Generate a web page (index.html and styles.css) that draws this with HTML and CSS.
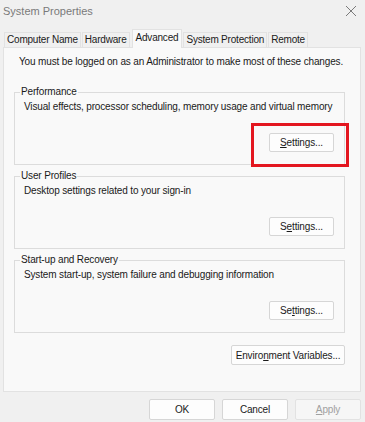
FILE: index.html
```html
<!DOCTYPE html>
<html lang="en">
<head>
    <meta charset="UTF-8">
    <title>System Properties</title>
    <link rel="stylesheet" href="styles.css">
</head>
<body>

    <!-- title bar -->
    <div class="titlebar">
        <span class="title">System Properties</span>
        <svg class="close" width="12" height="12" viewBox="0 0 12 12">
            <path d="M1 1 L11 11 M11 1 L1 11" stroke="#7a7a7a" stroke-width="1" fill="none"/>
        </svg>
    </div>

    <!-- tabs -->
    <div class="tabs">
        <div class="tab">Computer Name</div>
        <div class="tab">Hardware</div>
        <div class="tab active">Advanced</div>
        <div class="tab">System Protection</div>
        <div class="tab">Remote</div>
    </div>

    <div class="panel">
        <p class="notice">You must be logged on as an Administrator to make most of these changes.</p>

        <fieldset class="group">
            <legend>Performance</legend>
            <div class="desc">Visual effects, processor scheduling, memory usage and virtual memory</div>
            <div class="actions">
                <div class="marked">
                    <button class="btn"><u>S</u>ettings...</button>
                    <span class="highlight"></span>
                </div>
            </div>
        </fieldset>

        <fieldset class="group">
            <legend>User Profiles</legend>
            <div class="desc">Desktop settings related to your sign-in</div>
            <div class="actions">
                <button class="btn">S<u>e</u>ttings...</button>
            </div>
        </fieldset>

        <fieldset class="group">
            <legend>Start-up and Recovery</legend>
            <div class="desc">System start-up, system failure and debugging information</div>
            <div class="actions">
                <button class="btn">Se<u>t</u>tings...</button>
            </div>
        </fieldset>

        <div class="env">
            <button class="btn wide">Enviro<u>n</u>ment Variables...</button>
        </div>
    </div>

    <!-- dialog buttons -->
    <div class="footer">
        <button class="btn dlg">OK</button>
        <button class="btn dlg">Cancel</button>
        <button class="btn dlg disabled"><u>A</u>pply</button>
    </div>

</body>
</html>
```

FILE: styles.css
```css
body {
    margin: 0;
    width: 365px;
    height: 422px;
    background-color: #f0f0f0;
    font-family: "Liberation Sans", Arial, sans-serif;
    font-size: 10px;
    letter-spacing: -0.15px;
    color: #1a1a1a;
    overflow: hidden;
}
.titlebar {
    display: flex;
    justify-content: space-between;
    align-items: center;
    height: 22px;
    padding: 0 8px 0 3px;
}
.title {
    font-size: 11px;
    letter-spacing: 0;
    color: #7a7a7a;
}
.tabs {
    display: flex;
    align-items: flex-end;
    height: 25px;
    padding-left: 4px;
    position: relative;
    z-index: 1;
    letter-spacing: -0.2px;
}
.tab {
    height: 14px;
    line-height: 14px;
    padding: 0 2px;
    margin-right: 1px;
    border: 1px solid #e2e2e2;
    border-bottom: none;
    background-color: #f0f0f0;
}
.tab.active {
    height: 18px;
    line-height: 16px;
    padding: 0 3px;
    margin: 0 1px -1px 1px;
    background-color: #f9f9f9;
}
.panel {
    margin: 0 4px 0 3px;
    height: 345px;
    background-color: #f9f9f9;
    border: 1px solid #e2e2e2;
    box-sizing: border-box;
    padding: 8px 15px 0 10px;
}
.notice {
    margin: 0 0 18px 5px;
    line-height: 12px;
}
.group {
    margin: 0 0 5px 0;
    padding: 3px 10px 12px 9px;
    border: 1px solid #dcdcdc;
    min-width: 0;
}
.group legend {
    padding: 0 1px;
    margin-left: -4px;
    line-height: 12px;
}
.desc {
    line-height: 12px;
}
.actions {
    display: flex;
    justify-content: flex-end;
    margin-top: 20px;
}
.marked {
    position: relative;
}
.highlight {
    position: absolute;
    top: -10px;
    left: -18px;
    right: -15px;
    bottom: -15px;
    border: 3px solid #e3161f;
}
.btn {
    font-family: "Liberation Sans", Arial, sans-serif;
    font-size: 10px;
    letter-spacing: -0.15px;
    color: #1a1a1a;
    height: 19px;
    width: 65px;
    padding: 0;
    background-color: #fdfdfd;
    border: 1px solid #d6d6d6;
    border-radius: 2px;
}
.env {
    display: flex;
    justify-content: flex-end;
    margin-top: 12px;
}
.btn.wide {
    width: 114px;
    height: 20px;
}
.footer {
    display: flex;
    justify-content: flex-end;
    gap: 7px;
    padding: 7px 4px 0 0;
}
.btn.dlg {
    width: 66px;
    height: 21px;
}
.btn.disabled {
    color: #a0a0a0;
    background-color: #f6f6f6;
    border-color: #e2e2e2;
}
```
